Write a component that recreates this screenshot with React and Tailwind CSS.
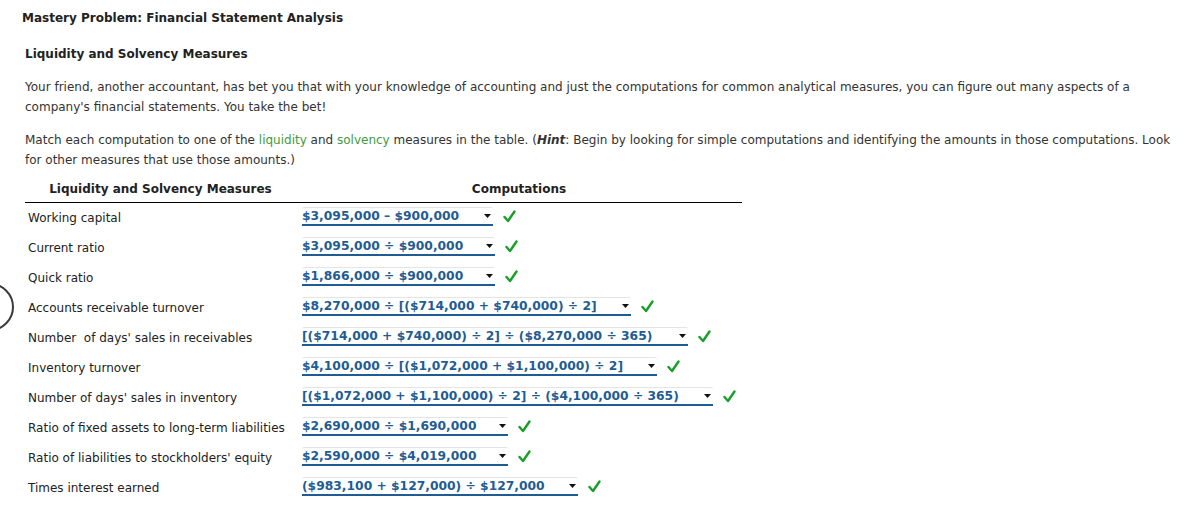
import React from 'react';

const rows = [
  { label: 'Working capital', value: '$3,095,000 \u2013 $900,000', w: 'w-[191px]' },
  { label: 'Current ratio', value: '$3,095,000 \u00f7 $900,000', w: 'w-[193px]' },
  { label: 'Quick ratio', value: '$1,866,000 \u00f7 $900,000', w: 'w-[193px]' },
  { label: 'Accounts receivable turnover', value: '$8,270,000 \u00f7 [($714,000 + $740,000) \u00f7 2]', w: 'w-[329px]' },
  { label: "Number\u00a0 of days' sales in receivables", value: '[($714,000 + $740,000) \u00f7 2] \u00f7 ($8,270,000 \u00f7 365)', w: 'w-[386px]' },
  { label: 'Inventory turnover', value: '$4,100,000 \u00f7 [($1,072,000 + $1,100,000) \u00f7 2]', w: 'w-[355px]' },
  { label: "Number of days' sales in inventory", value: '[($1,072,000 + $1,100,000) \u00f7 2] \u00f7 ($4,100,000 \u00f7 365)', w: 'w-[411px]' },
  { label: 'Ratio of fixed assets to long-term liabilities', value: '$2,690,000 \u00f7 $1,690,000', w: 'w-[206px]' },
  { label: "Ratio of liabilities to stockholders' equity", value: '$2,590,000 \u00f7 $4,019,000', w: 'w-[206px]' },
  { label: 'Times interest earned', value: '($983,100 + $127,000) \u00f7 $127,000', w: 'w-[276px]' },
];

function Check() {
  return (
    <svg width="13" height="13" viewBox="0 0 13 13" className="ml-[10px]">
      <path d="M1.5 7 L5 11 L11.5 1.5" fill="none" stroke="#1a9e2a" strokeWidth="2.4" strokeLinecap="round" strokeLinejoin="round" />
    </svg>
  );
}

function Pick({ value, w }) {
  return (
    <span className={`${w} h-[19px] inline-flex items-center justify-between border-b-2 border-[#1f5c94] border-t border-t-[#e4e4e4] rounded-t-[2px] text-[12.3px] font-bold text-[#1f5c94] leading-none`}>
      <span className="whitespace-nowrap pt-[1px]">{value}</span>
      <svg width="7" height="4" viewBox="0 0 7 4" className="mr-[2px]">
        <path d="M0 0 H7 L3.5 4 Z" fill="#111" />
      </svg>
    </span>
  );
}

export default function App() {
  return (
    <div className="relative min-h-[513px] bg-white text-[#222] text-[12px] font-['DejaVu_Sans',Verdana,sans-serif] overflow-hidden">
      <div className="absolute left-[-34px] top-[283px] w-[48px] h-[48px] rounded-full border-2 border-[#3a3a3a]" />
      <div className="pl-[22px] pt-[9px] font-bold text-[12px] text-[#222]">Mastery Problem: Financial Statement Analysis</div>
      <div className="pl-[25px] pr-[8px]">
        <div className="mt-[18px] font-bold text-[12px]">Liquidity and Solvency Measures</div>
        <p className="mt-[14px] leading-[20px] text-[12px] text-[#333]">
          Your friend, another accountant, has bet you that with your knowledge of accounting and just the computations for common analytical measures, you can figure out many aspects of a company's financial statements. You take the bet!
        </p>
        <p className="mt-[13px] leading-[20px] text-[12px] text-[#333]">
          Match each computation to one of the <span className="text-[#3f9b3f]">liquidity</span> and <span className="text-[#3f9b3f]">solvency</span> measures in the table. (<b><i>Hint</i></b>: Begin by looking for simple computations and identifying the amounts in those computations. Look for other measures that use those amounts.)
        </p>
        <div className="mt-[10px] w-[717px]">
          <div className="grid grid-cols-[271px_1fr] h-[23px] border-b border-black font-bold text-[12px]">
            <div className="text-center">Liquidity and Solvency Measures</div>
            <div className="text-center">Computations</div>
          </div>
          {rows.map((r) => (
            <div key={r.label} className="grid grid-cols-[277px_1fr] h-[30px] items-center">
              <div className="pl-[3px] text-[12px] text-[#222] whitespace-nowrap">{r.label}</div>
              <div className="flex items-center -mt-[3px]">
                <Pick value={r.value} w={r.w} />
                <Check />
              </div>
            </div>
          ))}
        </div>
      </div>
    </div>
  );
}
